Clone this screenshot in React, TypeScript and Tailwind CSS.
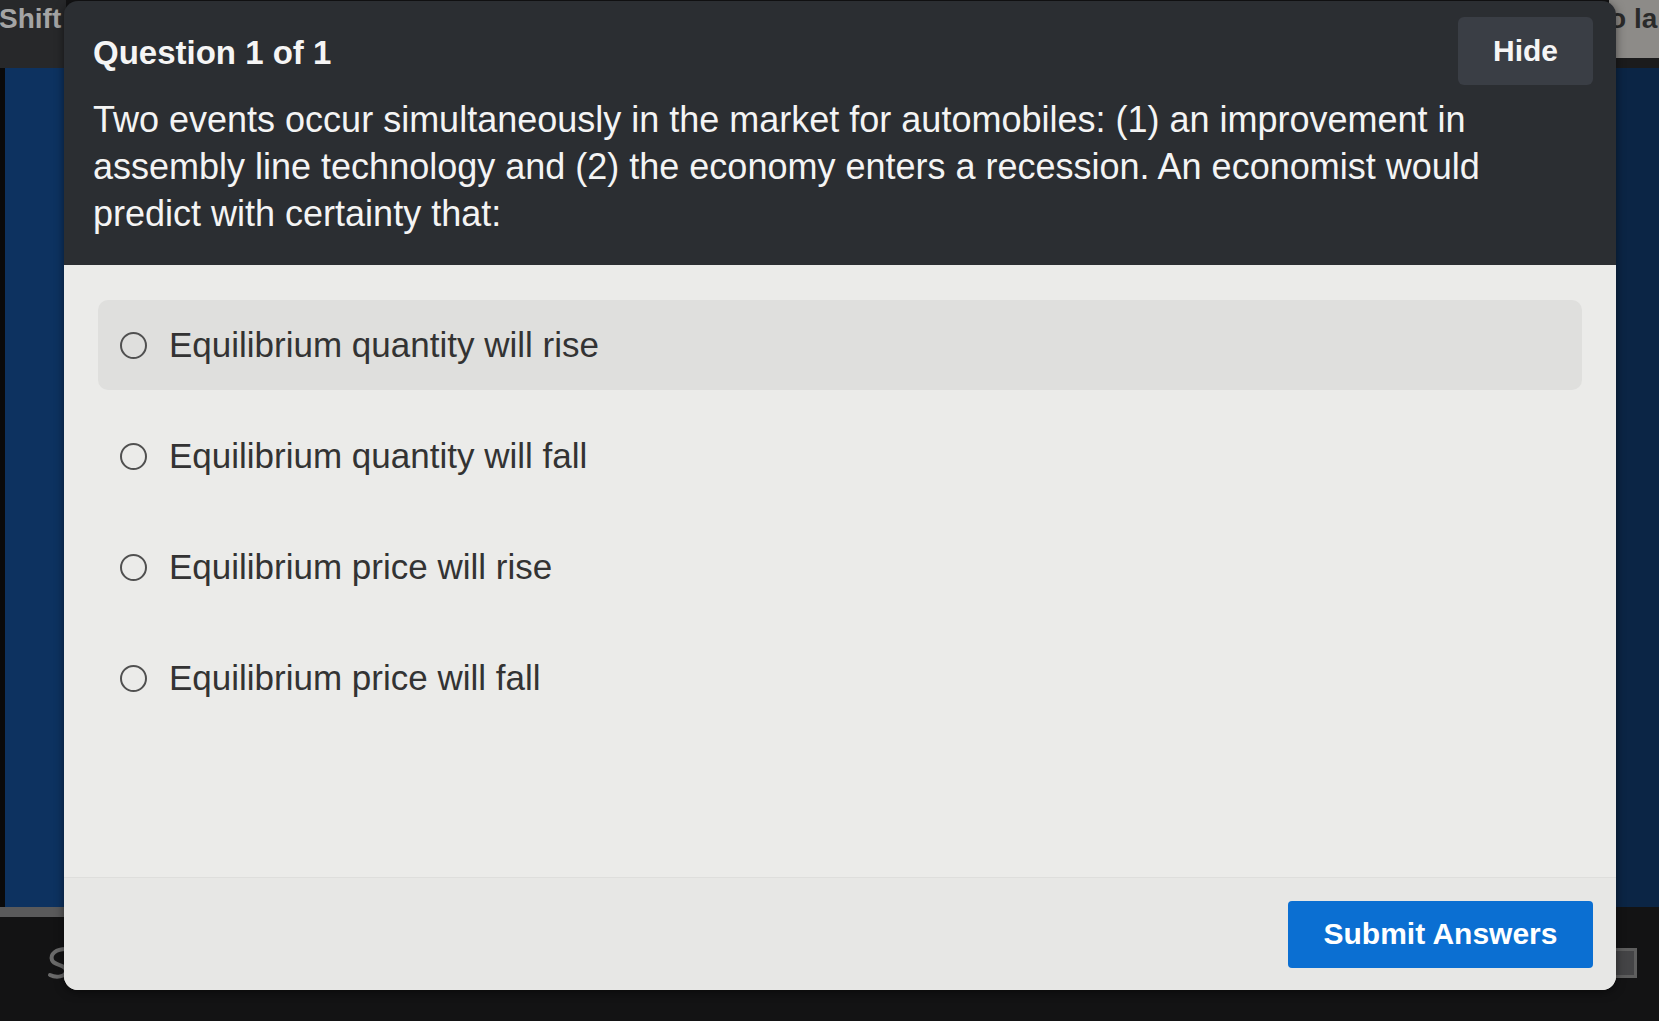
import React from "react";

const font = { fontFamily: '"Liberation Sans", Arial, Helvetica, sans-serif' };

const options = [
  "Equilibrium quantity will rise",
  "Equilibrium quantity will fall",
  "Equilibrium price will rise",
  "Equilibrium price will fall",
];

export default function App() {
  return (
    <div
      className="relative w-[1659px] h-[1021px] overflow-hidden bg-[#131314] flex flex-col"
      style={font}
    >
      {/* page behind the modal */}
      <div className="h-[68px] flex justify-between shrink-0">
        <div className="w-[66px] h-full bg-[#27282a] overflow-hidden">
          <div className="text-[28px] leading-[40px] font-bold text-[#a4a4a4] whitespace-nowrap -ml-[1px] -mt-[1px]">
            Shift
          </div>
        </div>
        <div className="w-[50px] h-full flex flex-col">
          <div className="h-[58px] bg-[#8d8b88] overflow-hidden">
            <div className="text-[28px] leading-[40px] font-bold text-[#2a2a2a] whitespace-nowrap -mt-[1px]">
              o la
            </div>
          </div>
          <div className="flex-1 bg-[#1b1b1c]" />
        </div>
      </div>
      <div className="h-[839px] flex justify-between shrink-0">
        <div className="w-[66px] h-full pl-[5px] bg-[#0a0a0b]">
          <div className="h-full bg-[#0d3260]" />
        </div>
        <div className="w-[50px] h-full bg-[#0b2545]" />
      </div>
      <div className="h-[10px] flex justify-between shrink-0">
        <div className="w-[66px] h-full bg-[#5a5a5b]" />
      </div>
      <div className="flex-1 flex justify-between items-start">
        <div className="ml-[44px] mt-[28px]">
          <svg width="30" height="36" viewBox="0 0 30 36" fill="none">
            <path
              d="M22 4 C12 4 6 9 8 15 C10 21 22 19 22 26 C22 32 12 33 6 30"
              stroke="#6a6a6a"
              strokeWidth="4"
              strokeLinecap="round"
            />
          </svg>
        </div>
        <div className="mr-[22px] mt-[31px] w-[30px] h-[30px] border-[3px] border-[#5e5e5e] bg-[#444446]" />
      </div>

      {/* modal */}
      <div className="absolute left-[64px] top-[1px] w-[1552px] h-[989px] rounded-[14px] overflow-hidden flex flex-col shadow-[0_2px_10px_rgba(0,0,0,0.5)]">
        <div className="h-[264px] shrink-0 bg-[#2b2e32] pl-[29px] pr-[23px] pt-[16px]">
          <div className="flex justify-between items-start">
            <h1 className="mt-[16px] text-[33px] leading-[40px] font-bold text-[#f5f5f5]">
              Question 1 of 1
            </h1>
            <button className="w-[135px] h-[68px] rounded-[6px] bg-[#3a3e45] text-[30px] leading-[40px] font-bold text-[#f5f5f5]">
              Hide
            </button>
          </div>
          <p className="mt-[11px] text-[36px] leading-[47px] text-[#f4f4f4]">
            <span className="block whitespace-nowrap">
              Two events occur simultaneously in the market for automobiles: (1) an improvement in
            </span>
            <span className="block whitespace-nowrap">
              assembly line technology and (2) the economy enters a recession. An economist would
            </span>
            <span className="block whitespace-nowrap">predict with certainty that:</span>
          </p>
        </div>
        <div className="flex-1 bg-[#ebebe9] flex flex-col">
          <div className="px-[34px] pt-[35px] flex flex-col gap-[21px]">
            {options.map((opt, i) => (
              <label
                key={opt}
                className={
                  i === 0
                    ? "h-[90px] rounded-[10px] bg-[#dfdfdd] flex items-center pl-[22px]"
                    : "h-[90px] rounded-[10px] flex items-center pl-[22px]"
                }
              >
                <span className="w-[27px] h-[27px] rounded-full border-2 border-[#505050] shrink-0" />
                <span className="ml-[22px] text-[35px] leading-[44px] text-[#333333]">
                  {opt}
                </span>
              </label>
            ))}
          </div>
          <div className="mt-auto h-[113px] bg-[#e7e7e5] border-t border-[#dededc] flex justify-end items-center pr-[23px]">
            <button className="w-[305px] h-[67px] rounded-[4px] bg-[#0b6fd2] text-[30px] leading-[40px] font-bold text-white">
              Submit Answers
            </button>
          </div>
        </div>
      </div>
    </div>
  );
}
